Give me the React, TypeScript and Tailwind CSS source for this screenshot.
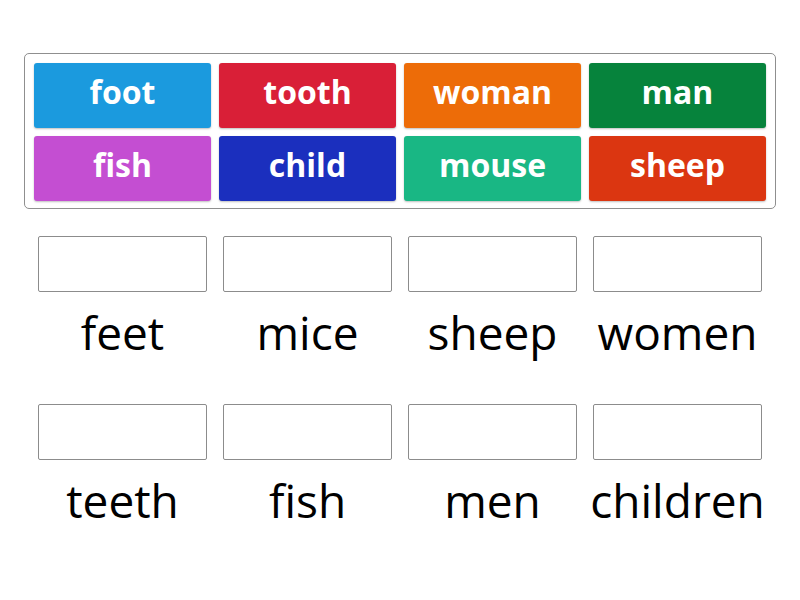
const tiles = [
  { label: 'foot', color: 'bg-[#1b9ade]' },
  { label: 'tooth', color: 'bg-[#d91f37]' },
  { label: 'woman', color: 'bg-[#ed6c08]' },
  { label: 'man', color: 'bg-[#06833c]' },
  { label: 'fish', color: 'bg-[#c44ed2]' },
  { label: 'child', color: 'bg-[#1b2fbe]' },
  { label: 'mouse', color: 'bg-[#19b784]' },
  { label: 'sheep', color: 'bg-[#db3611]' },
];

const targets = [
  ['feet', 'mice', 'sheep', 'women'],
  ['teeth', 'fish', 'men', 'children'],
];

export default function App() {
  return (
    <div
      className="h-[600px] w-[800px] bg-white"
      style={{ fontFamily: '"Open Sans", "Noto Sans", sans-serif' }}
    >
      <div className="pl-[24px] pt-[53px]">
        <div className="w-[752px] rounded-[5px] border border-[#8f8f8f] px-[5px] pb-[7px] pt-[9px]">
          <div className="grid grid-cols-4 gap-y-[8px]">
            {tiles.map((tile) => (
              <div key={tile.label} className="px-[4px]">
                <div
                  className={`flex h-[65px] items-center justify-center rounded-[3px] pb-[8px] text-[32px] font-bold text-white shadow-[0_1px_2px_rgba(0,0,0,0.25)] ${tile.color}`}
                >
                  {tile.label}
                </div>
              </div>
            ))}
          </div>
        </div>
      </div>

      <div className="pl-[30px] pt-[27px]">
        {targets.map((row, i) => (
          <div key={i} className={`grid w-[740px] grid-cols-4 ${i > 0 ? 'mt-[41px]' : ''}`}>
            {row.map((word) => (
              <div key={word} className="flex flex-col items-center">
                <div className="ml-[-1px] h-[56px] w-[169px] rounded-[2px] border border-[#8c8c8c]" />
                <div className="mt-[9px] text-[46px] leading-[62px] text-black">{word}</div>
              </div>
            ))}
          </div>
        ))}
      </div>
    </div>
  );
}
